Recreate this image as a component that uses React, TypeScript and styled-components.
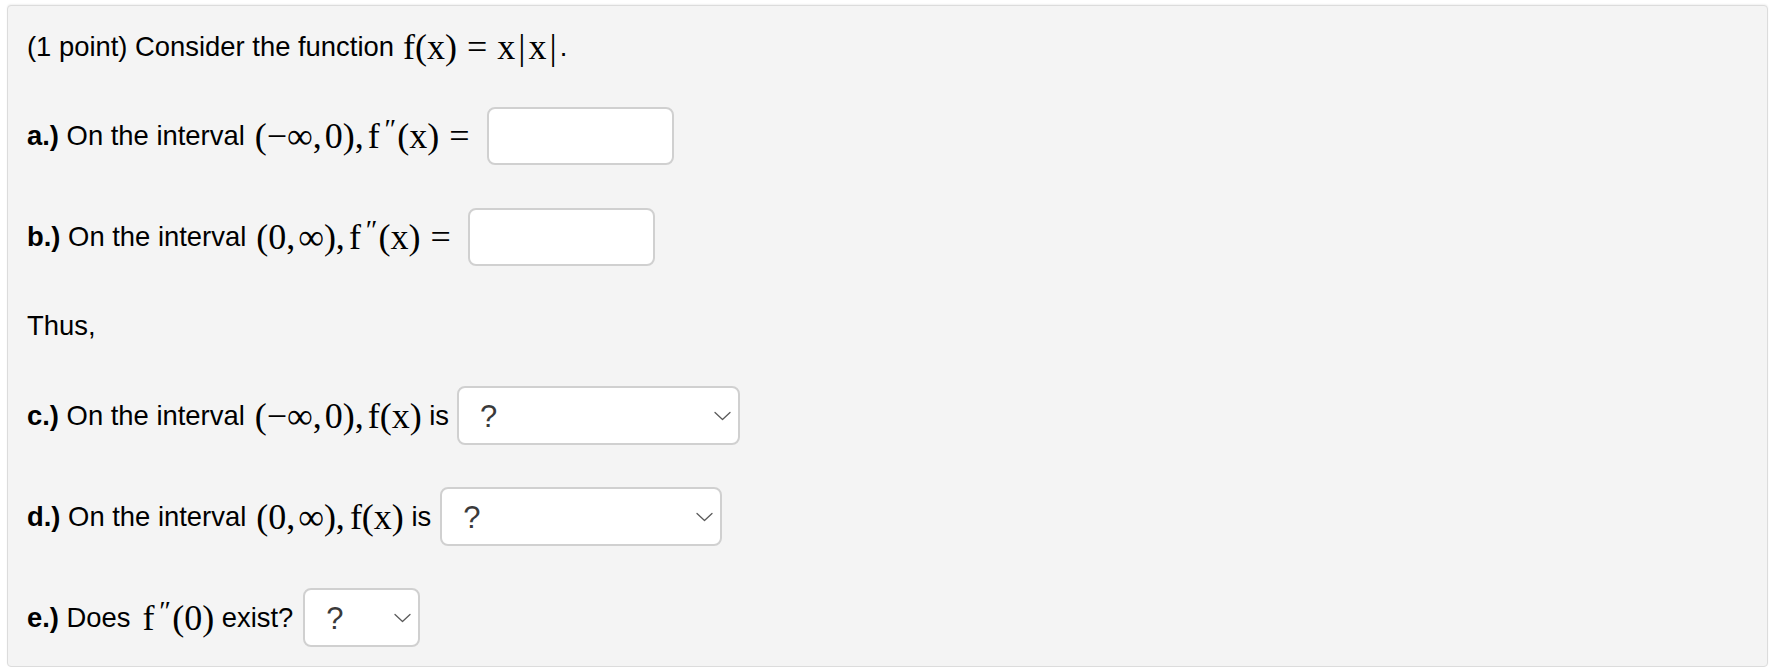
import React from "react";
import styled, { createGlobalStyle } from "styled-components";

const Global = createGlobalStyle`
  html, body { margin: 0; padding: 0; background: #ffffff; }
  body { font-family: "Liberation Sans", Arial, Helvetica, sans-serif; color: #000; }
`;

const Panel = styled.div`
  margin: 5px 2px 0 7px;
  background: #f4f4f4;
  border: 1px solid #dcdcdc;
  border-radius: 4px;
  box-shadow: 0 -1px 2px rgba(0, 0, 0, 0.06);
  padding: 11px 20px 18px 19px;
  display: flex;
  flex-direction: column;
  height: 662px;
  box-sizing: border-box;
`;

const Row = styled.div<{ $mt?: number }>`
  display: flex;
  align-items: center;
  min-height: 59px;
  margin-top: ${(p) => p.$mt ?? 0}px;
  font-size: 27.4px;
  white-space: pre;
`;

const Label = styled.span`
  font-weight: 700;
`;

const M = styled.span<{ $ml?: number }>`
  font-family: "Liberation Serif", "Times New Roman", serif;
  font-size: 36px;
  margin-left: ${(p) => p.$ml ?? 0}px;
`;

const Sp = styled.span<{ $w: number }>`
  display: inline-block;
  width: ${(p) => p.$w}px;
`;

const Bar = styled.span`
  margin: 0 3px;
`;

const Prime = styled.span`
  font-style: italic;
  font-size: 28px;
  position: relative;
  top: -10px;
  margin-left: 3px;
  margin-right: 3px;
`;

const TextInput = styled.input<{ $ml: number }>`
  margin-left: ${(p) => p.$ml}px;
  width: 187px;
  height: 58px;
  box-sizing: border-box;
  border: 2px solid #d0d0d0;
  border-radius: 8px;
  background: #fff;
  outline: none;
  font-size: 24px;
  padding: 0 10px;
`;

const SelectBox = styled.div<{ $ml: number; $w: number }>`
  margin-left: ${(p) => p.$ml}px;
  width: ${(p) => p.$w}px;
  height: 59px;
  box-sizing: border-box;
  border: 2px solid #d0d0d0;
  border-radius: 8px;
  background: #fff;
  display: flex;
  align-items: center;
  justify-content: space-between;
  padding: 0 7px 0 21px;
`;

const Q = styled.span`
  font-family: "Liberation Sans", Arial, sans-serif;
  font-size: 31px;
  color: #3a3a3a;
  line-height: 1;
  margin-top: 2px;
`;

const Chevron = () => (
  <svg width="17" height="10" viewBox="0 0 17 10" fill="none">
    <path d="M1 1.5 L8.5 8.5 L16 1.5" stroke="#5a5a5a" strokeWidth="1.3" strokeLinecap="round" strokeLinejoin="round" />
  </svg>
);

const Select = ({ ml, w }: { ml: number; w: number }) => (
  <SelectBox $ml={ml} $w={w}>
    <Q>?</Q>
    <Chevron />
  </SelectBox>
);

const Fpp = () => (
  <>
    f<Prime>″</Prime>
  </>
);

export default function App() {
  return (
    <>
      <Global />
      <Panel>
        <Row>
          <span>(1 point) Consider the function</span>
          <M $ml={9}>
            f(x)<Sp $w={10} />=<Sp $w={10} />x<Bar>|</Bar>x<Bar>|</Bar>
          </M>
          <span>.</span>
        </Row>
        <Row $mt={30}>
          <Label>a.)</Label>
          <span> On the interval</span>
          <M $ml={10}>
            (−∞,<Sp $w={3} />0),<Sp $w={4} />
            <Fpp />
            (x)<Sp $w={10} />=
          </M>
          <TextInput $ml={17} />
        </Row>
        <Row $mt={42}>
          <Label>b.)</Label>
          <span> On the interval</span>
          <M $ml={10}>
            (0,<Sp $w={3} />∞),<Sp $w={4} />
            <Fpp />
            (x)<Sp $w={10} />=
          </M>
          <TextInput $ml={17} />
        </Row>
        <Row $mt={30}>
          <span>Thus,</span>
        </Row>
        <Row $mt={31}>
          <Label>c.)</Label>
          <span> On the interval</span>
          <M $ml={10}>
            (−∞,<Sp $w={3} />0),<Sp $w={4} />f(x)
          </M>
          <span> is</span>
          <Select ml={8} w={283} />
        </Row>
        <Row $mt={42}>
          <Label>d.)</Label>
          <span> On the interval</span>
          <M $ml={10}>
            (0,<Sp $w={3} />∞),<Sp $w={5} />f(x)
          </M>
          <span> is</span>
          <Select ml={9} w={282} />
        </Row>
        <Row $mt={42}>
          <Label>e.)</Label>
          <span> Does</span>
          <M $ml={12}>
            <Fpp />
            (0)
          </M>
          <span> exist?</span>
          <Select ml={10} w={117} />
        </Row>
      </Panel>
    </>
  );
}
